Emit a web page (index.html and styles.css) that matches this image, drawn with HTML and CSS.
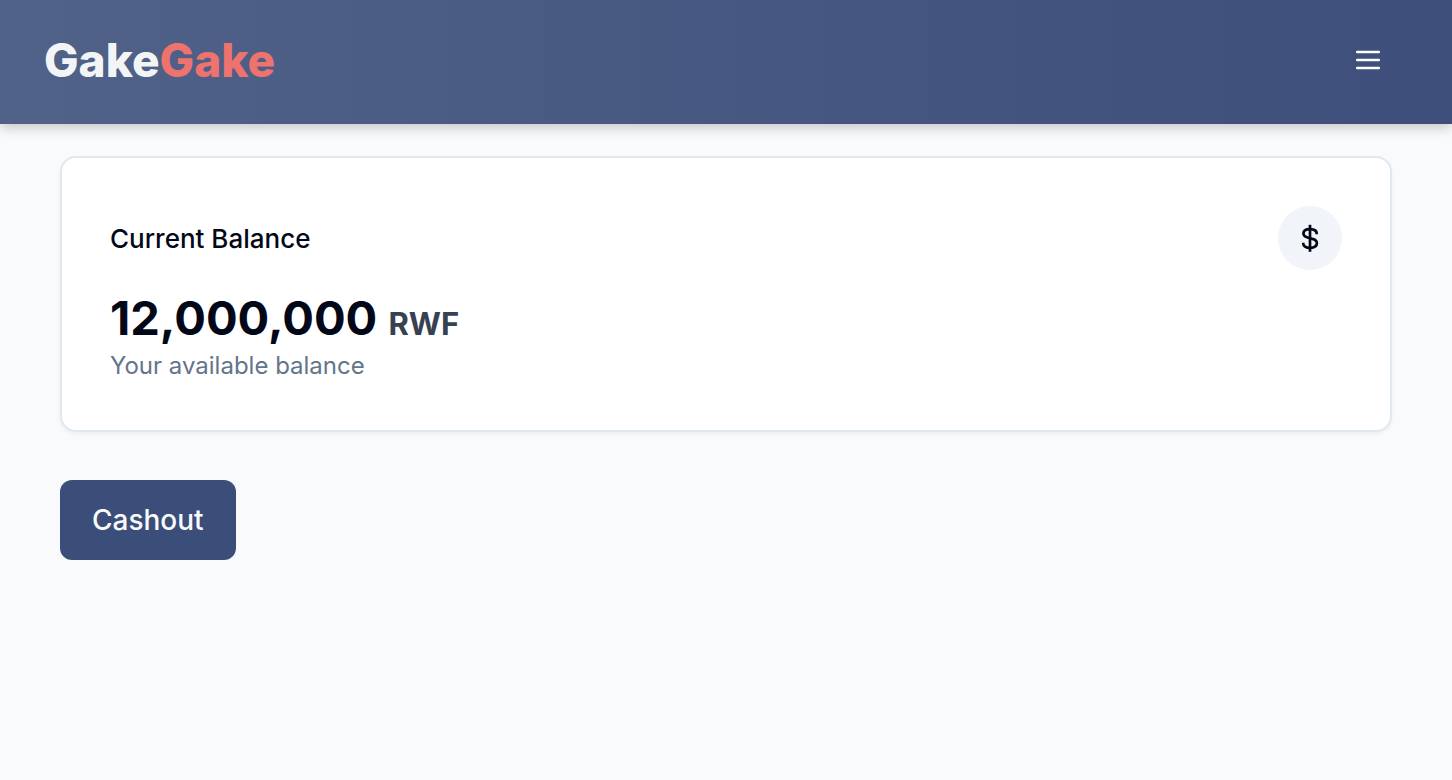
FILE: index.html
```html
<!DOCTYPE html>
<html lang="en">
  <head>
    <meta charset="UTF-8" />
    <meta name="viewport" content="width=device-width, initial-scale=1.0" />
    <title>GakeGake</title>
    <link rel="stylesheet" href="styles.css">
  </head>

  <body>
    <header class="navbar">
      <a class="logo" href="#">Gake<span class="logo-accent">Gake</span></a>
      <button class="menu-btn" type="button" aria-label="Open menu">
        <svg width="32" height="32" viewBox="0 0 32 32" fill="none" stroke="currentColor" stroke-width="2.5" stroke-linecap="round">
          <path d="M5.200 8h21.600M5.200 16h21.600M5.200 24h21.600" />
        </svg>
      </button>
    </header>

    <main class="content">
      <section class="card">
        <div class="card-header">
          <h2 class="card-title">Current Balance</h2>
          <span class="card-icon">
            <svg width="32" height="32" viewBox="0 0 32 32" fill="none" stroke="currentColor" stroke-width="2.7">
              <path d="M16 2.800v27" />
              <path d="M22.800 12.200C22.800 8.800 20 7.200 16 7.200s-6.600 1.600-6.600 4.400c0 3 2.800 3.800 6.600 4.600s6.900 1.600 6.900 4.900c0 3-2.900 4.700-6.900 4.700s-6.900-1.700-6.900-5.100" />
            </svg>
          </span>
        </div>
        <p class="amount">12,000,000 <span class="currency">RWF</span></p>
        <p class="note">Your available balance</p>
      </section>

      <button class="cashout" type="button">Cashout</button>
    </main>
  </body>
</html>
```

FILE: styles.css
```css
* {
  box-sizing: border-box;
  margin: 0;
}

body {
  min-height: 100vh;
  background-color: #f9fafc;
  color: #020817;
  font-family: Inter, sans-serif;
}

.navbar {
  display: flex;
  align-items: center;
  justify-content: space-between;
  height: 124px;
  padding: 0 68px 4px 44px;
  background: linear-gradient(to right, #506288, #3d4f7a);
  box-shadow: 0 4px 12px rgba(0, 0, 0, 0.2);
}

.logo {
  color: #f3f4f6;
  font-size: 46px;
  font-weight: 800;
  text-decoration: none;
}

.logo-accent {
  color: #ee726e;
}

.menu-btn {
  display: flex;
  padding: 0;
  border: none;
  background: none;
  color: white;
}

.content {
  padding: 32px 60px;
}

.card {
  padding: 48px;
  border: 2px solid #e2e8f0;
  border-radius: 16px;
  background-color: white;
  box-shadow: 0 2px 4px rgba(0, 0, 0, 0.05);
}

.card-header {
  display: flex;
  align-items: center;
  justify-content: space-between;
  margin-bottom: 16px;
}

.card-title {
  font-size: 26px;
  font-weight: 500;
}

.card-icon {
  display: flex;
  align-items: center;
  justify-content: center;
  width: 64px;
  height: 64px;
  border-radius: 50%;
  background-color: #f1f5f9;
}

.amount {
  font-size: 47px;
  font-weight: 700;
  line-height: 64px;
}

.currency {
  color: #374151;
  font-size: 31px;
  line-height: 1;
}

.note {
  color: #64748b;
  font-size: 24px;
  line-height: 32px;
}

.cashout {
  height: 80px;
  margin-top: 48px;
  padding: 0 32px;
  border: none;
  border-radius: 12px;
  background-color: #3b4d79;
  color: #f8fafc;
  font-family: inherit;
  font-size: 28px;
  font-weight: 500;
}
```
